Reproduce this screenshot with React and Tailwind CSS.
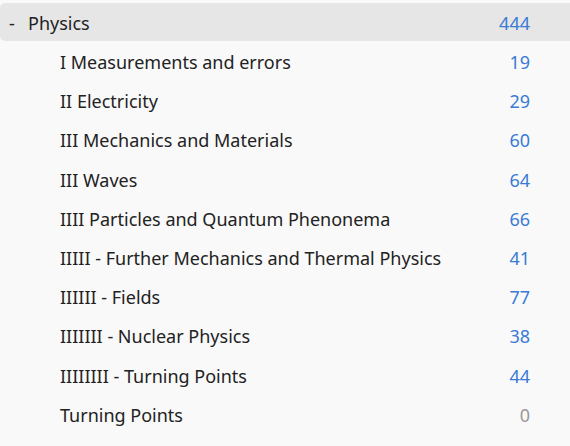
import React from "react";

const items = [
  ["I Measurements and errors", 19],
  ["II Electricity", 29],
  ["III Mechanics and Materials", 60],
  ["III Waves", 64],
  ["IIII Particles and Quantum Phenonema", 66],
  ["IIIII - Further Mechanics and Thermal Physics", 41],
  ["IIIIII - Fields", 77],
  ["IIIIIII - Nuclear Physics", 38],
  ["IIIIIIII - Turning Points", 44],
  ["Turning Points", 0],
];

export default function App() {
  return (
    <div
      className="w-[570px] h-[446px] bg-[#f9f9f9] pt-[3px] text-[18px] text-[#222222]"
      style={{ fontFamily: '"Noto Sans", sans-serif' }}
    >
      <div className="h-[38px] bg-[#e6e6e6] rounded-l-[5px] flex items-center pt-[2px] pl-[9px] pr-[40px]">
        <span className="w-[19px]">-</span>
        <span className="flex-1">Physics</span>
        <span className="text-[#3a7bd5]">444</span>
      </div>
      <div className="flex flex-col pt-[1px]">
        {items.map(([label, n]) => (
          <div key={label} className="h-[39.2px] flex items-center pt-[2px] pl-[60px] pr-[40px]">
            <span className="flex-1">{label}</span>
            <span className={n === 0 ? "text-[#9a9a9a]" : "text-[#3a7bd5]"}>{n}</span>
          </div>
        ))}
      </div>
    </div>
  );
}
